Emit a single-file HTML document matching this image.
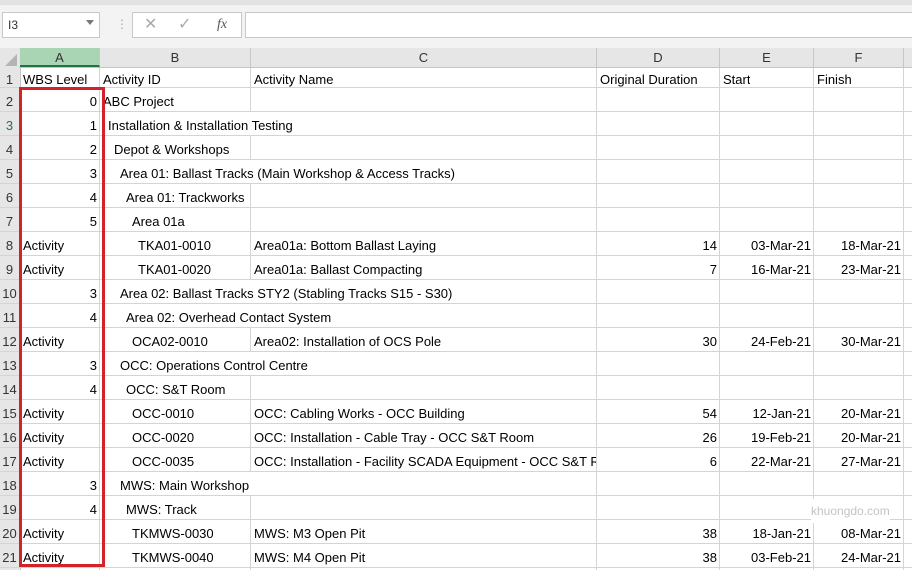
<!DOCTYPE html>
<html><head><meta charset="utf-8"><style>
html,body{margin:0;width:912px;height:570px;overflow:hidden}
body{background:#fff;font-family:"Liberation Sans",Arial,sans-serif;position:relative}
.a{position:absolute;white-space:nowrap}
.t{font-size:13px;color:#000;line-height:24px;height:24px;overflow:hidden;padding-top:3px;box-sizing:border-box}
.r{text-align:right}
.hl{position:absolute;left:0;width:912px;height:1px;background:#d4d4d4}
.vl{position:absolute;height:503px;width:1px;background:#d4d4d4}
.ch{position:absolute;top:48px;height:19px;line-height:19px;font-size:13px;text-align:center;color:#333;background:#e6e6e6;border-right:1px solid #c6c6c6}
.rh{position:absolute;left:0;width:19px;text-align:center;font-size:13px;color:#333;background:#e6e6e6;line-height:24px;height:23px;padding-top:2px;box-sizing:border-box}
</style></head><body>
<div class="a" style="left:0;top:0;width:912px;height:48px;background:#f3f3f3"></div>
<div class="a" style="left:0;top:0;width:912px;height:5px;background:#e2e2e2"></div>
<div class="a" style="left:2px;top:12px;width:96px;height:24px;background:#fff;border:1px solid #c8c8c8"></div>
<div class="a" style="left:8px;top:12px;font-size:12px;line-height:26px;color:#333">I3</div>
<div class="a" style="left:86px;top:20px;width:0;height:0;border-left:4px solid transparent;border-right:4px solid transparent;border-top:5px solid #777"></div>
<div class="a" style="left:116px;top:14px;font-size:12px;color:#aaa;line-height:20px">⋮</div>
<div class="a" style="left:132px;top:12px;width:108px;height:24px;background:#fff;border:1px solid #c8c8c8"></div>
<div class="a" style="left:144px;top:13px;font-size:16px;color:#aaa;line-height:24px">✕</div>
<div class="a" style="left:178px;top:13px;font-size:16px;color:#aaa;line-height:24px">✓</div>
<div class="a" style="left:217px;top:13px;font-size:14px;color:#555;font-style:italic;font-family:'Liberation Serif',serif;line-height:24px">fx</div>
<div class="a" style="left:245px;top:12px;width:666px;height:24px;background:#fff;border:1px solid #c8c8c8"></div>
<div class="a" style="left:0;top:48px;width:20px;height:19px;background:#e6e6e6"></div>
<div class="a" style="left:5px;top:54px;width:0;height:0;border-left:12px solid transparent;border-bottom:12px solid #b4b4b4"></div>
<div class="ch" style="left:20px;width:79px;background:#a9d5b5;border-bottom:2px solid #217346;height:17px">A</div>
<div class="ch" style="left:100px;width:150px">B</div>
<div class="ch" style="left:251px;width:345px">C</div>
<div class="ch" style="left:597px;width:122px">D</div>
<div class="ch" style="left:720px;width:93px">E</div>
<div class="ch" style="left:814px;width:89px">F</div>
<div class="ch" style="left:904px;width:20px"></div>
<div class="a" style="left:0;top:67px;width:20px;height:503px;background:#e6e6e6"></div>
<div class="vl" style="left:99px;top:67px"></div><div class="vl" style="left:250px;top:67px"></div><div class="vl" style="left:596px;top:67px"></div><div class="vl" style="left:719px;top:67px"></div><div class="vl" style="left:813px;top:67px"></div><div class="vl" style="left:903px;top:67px"></div>
<div class="vl" style="left:20px;top:67px;background:#c6c6c6"></div>
<div class="hl" style="top:67px;background:#c6c6c6"></div>
<div id="g"></div>
<script>
(function(){
var rows=[
["WBS Level","Activity ID","Activity Name","Original Duration","Start","Finish",3],
["0","ABC Project","","","","",3],
["1","Installation &amp; Installation Testing","","","","",8],
["2","Depot &amp; Workshops","","","","",14],
["3","Area 01: Ballast Tracks (Main Workshop &amp; Access Tracks)","","","","",20],
["4","Area 01: Trackworks","","","","",26],
["5","Area 01a","","","","",32],
["Activity","TKA01-0010","Area01a: Bottom Ballast Laying","14","03-Mar-21","18-Mar-21",38],
["Activity","TKA01-0020","Area01a: Ballast Compacting","7","16-Mar-21","23-Mar-21",38],
["3","Area 02: Ballast Tracks STY2 (Stabling Tracks S15 - S30)","","","","",20],
["4","Area 02: Overhead Contact System","","","","",26],
["Activity","OCA02-0010","Area02: Installation of OCS Pole","30","24-Feb-21","30-Mar-21",32],
["3","OCC: Operations Control Centre","","","","",20],
["4","OCC: S&amp;T Room","","","","",26],
["Activity","OCC-0010","OCC: Cabling Works - OCC Building","54","12-Jan-21","20-Mar-21",32],
["Activity","OCC-0020","OCC: Installation - Cable Tray - OCC S&amp;T Room","26","19-Feb-21","20-Mar-21",32],
["Activity","OCC-0035","OCC: Installation - Facility SCADA Equipment - OCC S&amp;T Room","6","22-Mar-21","27-Mar-21",32],
["3","MWS: Main Workshop","","","","",20],
["4","MWS: Track","","","","",26],
["Activity","TKMWS-0030","MWS: M3 Open Pit","38","18-Jan-21","08-Mar-21",32],
["Activity","TKMWS-0040","MWS: M4 Open Pit","38","03-Feb-21","24-Mar-21",32]];
var h="";
for(var i=0;i<rows.length;i++){
 var r=rows[i],y=(i==0?66:87+(i-1)*24),hh=(i==0?21:24);
 var lh='line-height:'+hh+'px;height:'+hh+'px;';
 h+='<div class="hl" style="top:'+(y+hh)+'px"></div>';
 h+='<div class="rh" style="top:'+(y+1)+'px;'+(i==2?'color:#217346;':'')+lh+'height:'+(hh-1)+'px">'+(i+1)+'</div>';
 var num=/^\d+$/.test(r[0]);
 if(i==0||!num) h+='<div class="a t" style="left:23px;top:'+y+'px;'+lh+'">'+r[0]+'</div>';
 else h+='<div class="a t r" style="left:22px;width:75px;top:'+y+'px;'+lh+'">'+r[0]+'</div>';
 var ov=!r[2]&&i>0;
 h+='<div class="a t" style="left:'+(100+r[6])+'px;top:'+(y+1)+'px;'+lh+'height:'+(hh-1)+'px;padding-top:2px;overflow:visible;'+(ov?'background:#fff;padding-right:3px;':'')+'">'+r[1]+'</div>';
 if(r[2]) h+='<div class="a t" style="left:254px;width:342px;top:'+y+'px;'+lh+'">'+r[2]+'</div>';
 if(i==0){h+='<div class="a t" style="left:600px;top:'+y+'px;'+lh+'">'+r[3]+'</div><div class="a t" style="left:723px;top:'+y+'px;'+lh+'">'+r[4]+'</div><div class="a t" style="left:817px;top:'+y+'px;'+lh+'">'+r[5]+'</div>';}
 else if(r[3]){h+='<div class="a t r" style="left:597px;width:120px;top:'+y+'px">'+r[3]+'</div><div class="a t r" style="left:720px;width:91px;top:'+y+'px">'+r[4]+'</div><div class="a t r" style="left:814px;width:87px;top:'+y+'px">'+r[5]+'</div>';}
}
document.getElementById('g').innerHTML=h;
})();
</script>
<div class="a" style="left:811px;top:499px;font-size:12px;color:#c4c4c4;line-height:24px;background:#fff">khuongdo.com</div>
<div class="a" style="left:19px;top:87px;width:80px;height:474px;border:3px solid #d2232a"></div>
</body></html>
